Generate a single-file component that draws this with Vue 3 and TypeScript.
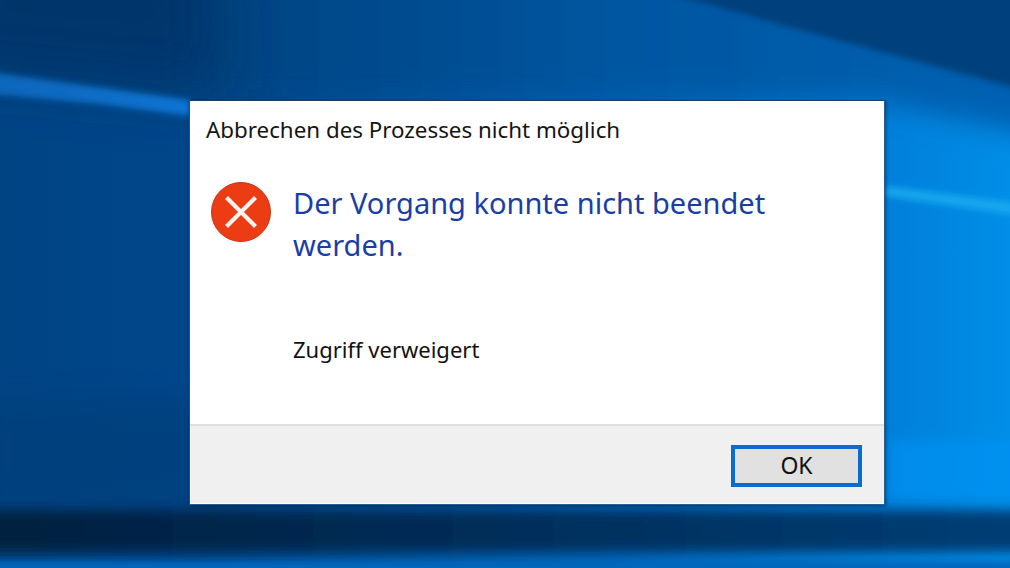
<script setup lang="ts">
const title = 'Abbrechen des Prozesses nicht möglich'
const heading = 'Der Vorgang konnte nicht beendet werden.'
const detail = 'Zugriff verweigert'
</script>

<template>
  <div class="desktop">
    <svg class="wallpaper" viewBox="0 0 1010 568" width="1010" height="568" aria-hidden="true">
      <defs>
        <linearGradient id="base" x1="0" y1="0" x2="1" y2="0">
          <stop offset="0" stop-color="#004484" />
          <stop offset="0.2" stop-color="#00478a" />
          <stop offset="0.6" stop-color="#0062b4" />
          <stop offset="0.88" stop-color="#0080da" />
          <stop offset="1" stop-color="#008ee8" />
        </linearGradient>
        <linearGradient id="bottom" x1="0" y1="0" x2="1" y2="0">
          <stop offset="0" stop-color="#001f3e" />
          <stop offset="0.5" stop-color="#002e5a" />
          <stop offset="1" stop-color="#003e76" />
        </linearGradient>
        <linearGradient id="wedge" x1="0" y1="0" x2="1" y2="0">
          <stop offset="0" stop-color="#003a72" />
          <stop offset="0.3" stop-color="#004686" />
          <stop offset="0.6" stop-color="#0056a0" />
          <stop offset="1" stop-color="#0062b4" />
        </linearGradient>
        <linearGradient id="ray" x1="0" y1="0" x2="1" y2="0">
          <stop offset="0" stop-color="#0a66ba" />
          <stop offset="1" stop-color="#0a74d4" />
        </linearGradient>
        <filter id="blur3" x="-20%" y="-40%" width="140%" height="180%"><feGaussianBlur stdDeviation="3" /></filter>
        <filter id="blur6" x="-20%" y="-40%" width="140%" height="180%"><feGaussianBlur stdDeviation="6" /></filter>
        <filter id="blur14" x="-30%" y="-50%" width="160%" height="200%"><feGaussianBlur stdDeviation="14" /></filter>
        <filter id="blur30" x="-60%" y="-60%" width="220%" height="220%"><feGaussianBlur stdDeviation="30" /></filter>
      </defs>
      <rect width="1010" height="568" fill="url(#base)" />
      <!-- the lit wedge at the top, darker to the left and in the right corner -->
      <polygon points="-40,-40 1050,-40 1050,140 870,100 190,100 -40,72" fill="url(#wedge)" filter="url(#blur14)" />
      <polygon points="-60,-60 210,-60 220,90 -60,62" fill="#00366a" filter="url(#blur30)" />
      <polygon points="480,-20 1030,-20 1030,92 800,30 620,-20" fill="#00407c" filter="url(#blur3)" />
      <!-- rays -->
      <polygon points="-10,72 190,100 190,116 100,104 -10,94" fill="url(#ray)" filter="url(#blur3)" />
      <polygon points="885,186 1020,203 1020,216 885,196" fill="#12a6ee" filter="url(#blur3)" />
      <!-- left side falls off towards the bottom -->
      <rect x="-20" y="400" width="230" height="110" fill="#003e78" opacity="0.6" filter="url(#blur14)" />
      <rect x="890" y="440" width="140" height="60" fill="#0092f2" opacity="0.7" filter="url(#blur6)" />
      <!-- dark floor band and lit strip under it -->
      <rect x="-20" y="510" width="1050" height="42" fill="url(#bottom)" filter="url(#blur6)" />
      <rect x="-20" y="561" width="1050" height="14" fill="#0068bc" filter="url(#blur3)" />
    </svg>

    <section class="dialog">
      <div class="body">
        <h1 class="title">{{ title }}</h1>
        <div class="message">
          <svg class="error-icon" viewBox="0 0 60 60" width="60" height="60" aria-hidden="true">
            <circle cx="30" cy="30" r="29.5" fill="#ec3c14" stroke="#c9341a" />
            <path d="M15.5 15.5 44.5 44.5M44.5 15.5 15.5 44.5" stroke="#fff3ee" stroke-width="4.2" fill="none" />
          </svg>
          <div class="copy">
            <h2 class="heading">{{ heading }}</h2>
            <p class="detail">{{ detail }}</p>
          </div>
        </div>
      </div>
      <footer class="actions">
        <button class="ok" type="button">OK</button>
      </footer>
    </section>
  </div>
</template>

<style>
html, body {
  margin: 0;
  background: #00468a;
  overflow: hidden;
}
</style>

<style scoped>
.desktop {
  position: relative;
  width: 1010px;
  height: 568px;
  overflow: hidden;
  font-family: "Noto Sans", "Open Sans", "DejaVu Sans", sans-serif;
}
.wallpaper {
  position: absolute;
  inset: 0;
  display: block;
}
/* a window on the desktop */
.dialog {
  position: absolute;
  left: 189px;
  top: 100px;
  width: 696px;
  height: 405px;
  box-sizing: border-box;
  display: flex;
  flex-direction: column;
  background: #fff;
  border: 1px solid #2a5f92;
  border-top-color: #1d3f66;
  border-left-color: #26517d;
  box-shadow: 1px 1px 3px rgba(0, 20, 50, 0.5), inset 0 0 0 1px #fff;
}
.body {
  flex: 1;
  padding: 14px 16px 0 16px;
}
.title {
  margin: 0;
  font-size: 22.35px;
  line-height: 29px;
  font-weight: 400;
  color: #141414;
}
.message {
  display: flex;
  margin-top: 38px;
  margin-left: 5px;
  gap: 22px;
}
.error-icon {
  flex: none;
}
.heading {
  margin: 0;
  width: 520px;
  font-size: 29px;
  line-height: 42px;
  font-weight: 400;
  color: #1a3ea6;
}
.detail {
  margin: 69px 0 0;
  font-size: 22px;
  line-height: 29px;
  color: #111;
}
.actions {
  flex: none;
  height: 80px;
  box-sizing: border-box;
  display: flex;
  justify-content: flex-end;
  align-items: flex-start;
  padding: 19px 22px 0 0;
  background: #f0f0f0;
  border-top: 2px solid #dfdfdf;
  border-bottom: 1px solid #fff;
}
.ok {
  width: 131px;
  height: 42px;
  box-sizing: border-box;
  background: #e1e1e1;
  border: 4px solid #0a6cd0;
  font: inherit;
  font-size: 23px;
  line-height: 1;
  color: #111;
  padding: 0 0 2px;
}
</style>
